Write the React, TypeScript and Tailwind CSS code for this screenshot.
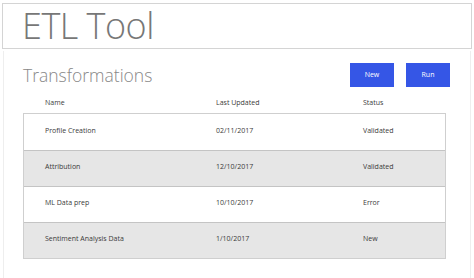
const rows = [
  { name: 'Profile Creation', updated: '02/11/2017', status: 'Validated' },
  { name: 'Attribution', updated: '12/10/2017', status: 'Validated' },
  { name: 'ML Data prep', updated: '10/10/2017', status: 'Error' },
  { name: 'Sentiment Analysis Data', updated: '1/10/2017', status: 'New' },
];

export default function App() {
  return (
    <div className="w-[474px] h-[278px] bg-white px-[2px] pt-[3px] overflow-hidden font-['Open_Sans',sans-serif]">
      {/* header */}
      <div className="h-[46px] border border-[#d4d4d4] flex items-center pl-[19px]">
        <h1 className="text-[36px] leading-none font-light text-[#777] tracking-[-0.5px]">ETL Tool</h1>
      </div>

      {/* panel */}
      <div className="mt-[2px] h-[230px] border-l border-r border-[#eeeeee] mx-[1px] pl-[19px] pr-[24px]">
        <div className="flex items-center justify-between pt-[12px]">
          <h2 className="text-[17.5px] leading-none font-light text-[#888] pt-[2px]">Transformations</h2>
          <div className="flex gap-[12px] mr-[-4px]">
            <button className="w-[44px] h-[24px] bg-[#3556e6] text-white text-[7px]">New</button>
            <button className="w-[44px] h-[24px] bg-[#3556e6] text-white text-[7px]">Run</button>
          </div>
        </div>

        <div className="mt-[6px] grid grid-cols-[171px_147px_1fr] text-[7px] text-[#3a3a3a] h-[20px] items-center pl-[22px]">
          <span>Name</span>
          <span>Last Updated</span>
          <span>Status</span>
        </div>

        <div className="border border-[#cfcfcf]">
          {rows.map((r, i) => (
            <div
              key={r.name}
              className={`grid grid-cols-[171px_147px_1fr] h-[36px] items-center pl-[21px] pb-[2px] text-[7px] text-[#3a3a3a] ${
                i > 0 ? 'border-t border-[#c4c4c4]' : ''
              } ${i % 2 === 1 ? 'bg-[#e6e6e6]' : 'bg-white'}`}
            >
              <span>{r.name}</span>
              <span>{r.updated}</span>
              <span>{r.status}</span>
            </div>
          ))}
        </div>
      </div>
    </div>
  );
}
